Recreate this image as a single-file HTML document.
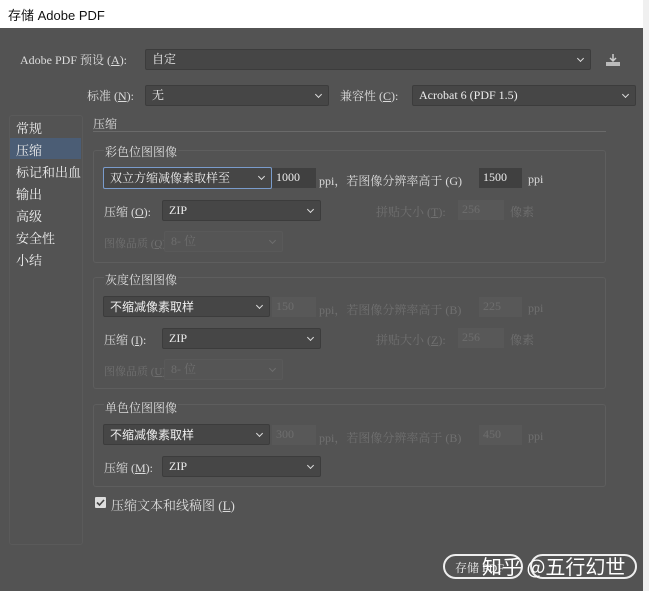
<!DOCTYPE html><html><head><meta charset="utf-8"><style>
body{margin:0;width:649px;height:591px;background:#535353;position:relative;overflow:hidden;font-family:"Liberation Serif","Noto Serif CJK SC",serif;font-size:12px;color:#dcdcdc}
.a{position:absolute;white-space:nowrap}
.t{position:absolute;left:0;top:0;width:649px;height:28px;background:#fff;color:#111;font-family:"Liberation Sans","Noto Sans CJK SC",sans-serif;font-size:13px}
.s{position:absolute;background:#464646;border:1px solid #3c3c3c;box-sizing:border-box;border-radius:2px;color:#eee;padding-left:6px;line-height:19px;font-size:12px}
.s:after{content:"";position:absolute;right:7px;top:6px;width:4px;height:4px;border-right:1.5px solid #ddd;border-bottom:1.5px solid #ddd;transform:rotate(45deg)}
.d{background:#555;border-color:#595959;color:#6e6e6e}.d:after{border-color:#6e6e6e}
.i{position:absolute;background:#404040;color:#eee;box-sizing:border-box;padding-left:4px;line-height:18px;font-size:12px}
.di{background:#585858;color:#6e6e6e}
.g{position:absolute;border:1px solid #5e5e5e;border-radius:3px;box-sizing:border-box}
.dt{color:#707070}
</style></head><body>
<div class="t"><span class="a" style="left:8px;top:5px">存储 Adobe PDF</span></div>
<div style="position:absolute;left:643px;top:0;width:6px;height:591px;background:#f0f0f0"></div>
<div class="a" style="left:20px;top:51px">Adobe PDF 预设 (<u>A</u>):</div>
<div class="s" style="left:145px;top:49px;width:446px;height:21px">自定</div>
<div class="a" style="left:605px;top:53px;width:16px;height:14px"><svg width="16" height="14"><path d="M8 1v7M5 5l3 3 3-3" stroke="#ccc" fill="none" stroke-width="1.5"/><rect x="1" y="9" width="14" height="4" fill="#bbb"/></svg></div>
<div class="a" style="left:87px;top:87px">标准 (<u>N</u>):</div>
<div class="s" style="left:145px;top:85px;width:184px;height:21px">无</div>
<div class="a" style="left:340px;top:87px">兼容性 (<u>C</u>):</div>
<div class="s" style="left:412px;top:85px;width:224px;height:21px">Acrobat 6 (PDF 1.5)</div>
<div class="g" style="left:9px;top:115px;width:74px;height:430px;border-color:#5a5a5a"></div>
<div class="a" style="left:10px;top:138px;width:71px;height:21px;background:#4b5d75"></div>
<div class="a" style="left:16px;top:118px;line-height:22px;font-size:13px;color:#eee">常规<br>压缩<br>标记和出血<br>输出<br>高级<br>安全性<br>小结</div>
<div class="a" style="left:93px;top:115px">压缩</div>
<div class="a" style="left:93px;top:131px;width:513px;height:1px;background:#6a6a6a"></div>
<div class="g" style="left:93px;top:150px;width:513px;height:113px"></div>
<div class="a" style="left:104px;top:143px;background:#535353;padding:0 1px">彩色位图图像</div>
<div class="s" style="left:103px;top:167px;width:169px;height:22px;border-color:#7a9ccc;line-height:20px">双立方缩减像素取样至</div>
<div class="i" style="left:272px;top:168px;width:44px;height:20px">1000</div>
<div class="a" style="left:319px;top:172px">ppi，若图像分辨率高于 (G)</div>
<div class="i" style="left:479px;top:168px;width:43px;height:20px">1500</div>
<div class="a" style="left:528px;top:172px">ppi</div>
<div class="a" style="left:104px;top:203px">压缩 (<u>O</u>):</div>
<div class="s" style="left:162px;top:200px;width:159px;height:21px">ZIP</div>
<div class="a dt" style="left:376px;top:203px">拼贴大小 (<u>T</u>):</div>
<div class="i di" style="left:458px;top:200px;width:46px;height:20px">256</div>
<div class="a dt" style="left:510px;top:203px">像素</div>
<div class="a dt" style="left:104px;top:235px;font-size:11px">图像品质 (<u>Q</u>):</div>
<div class="s d" style="left:164px;top:231px;width:119px;height:21px">8- 位</div>
<div class="g" style="left:93px;top:277px;width:513px;height:112px"></div>
<div class="a" style="left:104px;top:271px;background:#535353;padding:0 1px">灰度位图图像</div>
<div class="s" style="left:103px;top:296px;width:167px;height:21px;font-family:'Noto Sans CJK SC',sans-serif">不缩减像素取样</div>
<div class="i di" style="left:272px;top:297px;width:44px;height:20px">150</div>
<div class="a dt" style="left:319px;top:301px">ppi，若图像分辨率高于 (B)</div>
<div class="i di" style="left:479px;top:297px;width:43px;height:20px">225</div>
<div class="a dt" style="left:528px;top:301px">ppi</div>
<div class="a" style="left:104px;top:331px">压缩 (<u>I</u>):</div>
<div class="s" style="left:162px;top:328px;width:159px;height:21px">ZIP</div>
<div class="a dt" style="left:376px;top:331px">拼贴大小 (<u>Z</u>):</div>
<div class="i di" style="left:458px;top:328px;width:46px;height:20px">256</div>
<div class="a dt" style="left:510px;top:331px">像素</div>
<div class="a dt" style="left:104px;top:363px;font-size:11px">图像品质 (<u>U</u>):</div>
<div class="s d" style="left:164px;top:359px;width:119px;height:21px">8- 位</div>
<div class="g" style="left:93px;top:404px;width:513px;height:83px"></div>
<div class="a" style="left:104px;top:399px;background:#535353;padding:0 1px">单色位图图像</div>
<div class="s" style="left:103px;top:424px;width:167px;height:21px;font-family:'Noto Sans CJK SC',sans-serif">不缩减像素取样</div>
<div class="i di" style="left:272px;top:425px;width:44px;height:20px">300</div>
<div class="a dt" style="left:319px;top:429px">ppi，若图像分辨率高于 (B)</div>
<div class="i di" style="left:479px;top:425px;width:43px;height:20px">450</div>
<div class="a dt" style="left:528px;top:429px">ppi</div>
<div class="a" style="left:104px;top:459px">压缩 (<u>M</u>):</div>
<div class="s" style="left:162px;top:456px;width:159px;height:21px">ZIP</div>
<div class="a" style="left:95px;top:497px;width:11px;height:11px;background:#ddd;border-radius:1px"><svg width="11" height="11"><path d="M2 5.5l2.5 2.5 4.5-5" stroke="#444" stroke-width="1.6" fill="none"/></svg></div>
<div class="a" style="left:111px;top:495px;font-size:13px">压缩文本和线稿图 (<u>L</u>)</div>
<div class="a" style="left:443px;top:554px;width:80px;height:25px;border:2px solid #eee;border-radius:13px;box-sizing:border-box"></div>
<div class="a" style="left:530px;top:554px;width:107px;height:25px;border:2px solid #eee;border-radius:13px;box-sizing:border-box"></div>
<div class="a" style="left:455px;top:559px;color:#eee">存储 PDF</div>
<div class="a" style="left:482px;top:551px;font-size:20px;color:#fff;font-family:'Noto Sans CJK SC',sans-serif">知乎 @五行幻世</div>
</body></html>
